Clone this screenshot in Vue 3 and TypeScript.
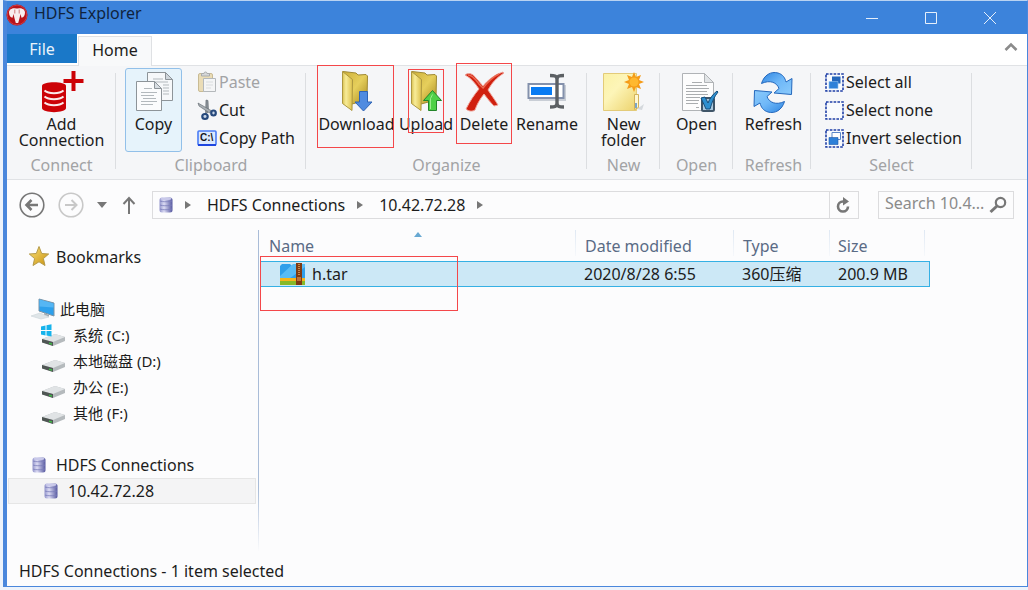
<script setup lang="ts">
import { ref } from 'vue'

interface Drive {
  name: string
  system: boolean
}

interface FileRow {
  name: string
  modified: string
  type: string
  size: string
}

const drives: Drive[] = [
  { name: '系统 (C:)', system: true },
  { name: '本地磁盘 (D:)', system: false },
  { name: '办公 (E:)', system: false },
  { name: '其他 (F:)', system: false },
]

const files: FileRow[] = [
  { name: 'h.tar', modified: '2020/8/28 6:55', type: '360压缩', size: '200.9 MB' },
]

const search = ref('')
</script>

<template>
  <div class="window">
    <header class="titlebar">
      <svg class="logo" viewBox="0 0 22 22" aria-hidden="true">
        <circle cx="11" cy="11" r="10.500" fill="#b8141b" />
        <circle cx="11" cy="11" r="9.800" fill="none" stroke="#cf3a41" />
        <path d="M10 4.500C7 3.500 3 5 3 8.500c0 3 1.500 5 3.500 5.200L7.500 10l.8 3.500L9.800 19h2.400l1.500-5.500.8-3.500 1 3.700c2-.2 3.500-2.200 3.500-5.200C19 5 15 3.500 12 4.500z" fill="#f8eeef" />
        <path d="M8.800 5.500v4M13.200 5.500v4" stroke="#cf787b" fill="none" />
      </svg>
      <h1>HDFS Explorer</h1>
      <div class="controls">
        <button type="button" aria-label="Minimize"><svg viewBox="0 0 14 14"><path d="M1 7.500h12" /></svg></button>
        <button type="button" aria-label="Maximize"><svg viewBox="0 0 14 14"><path d="M1.500 1.500h11v11h-11z" /></svg></button>
        <button type="button" aria-label="Close"><svg viewBox="0 0 14 14"><path d="M1 1l12 12M13 1L1 13" /></svg></button>
      </div>
    </header>

    <div class="tabs">
      <button type="button" class="tab file">File</button>
      <button type="button" class="tab home">Home</button>
      <button type="button" class="collapse" aria-label="Collapse ribbon">
        <svg viewBox="0 0 14 10"><path d="M1.500 8L7 2.500 12.500 8" fill="none" stroke="#8b8b8b" stroke-width="2.600" /></svg>
      </button>
    </div>

    <div class="ribbon">
      <section class="group connect">
        <div class="commands">
          <button type="button" class="large">
            <svg viewBox="0 0 42 42">
              <path d="M1 15c0-5 24-5 24 0v22c0 5.500-24 5.500-24 0z" fill="#cc0207" />
              <path d="M3.500 19.500c4 3.500 15 3.500 19 0M3.500 25.500c4 3.500 15 3.500 19 0M3.500 31.500c4 3.500 15 3.500 19 0" fill="none" stroke="#fbe9ea" stroke-width="2" />
              <path d="M32.500 0v20M22.500 10h20" stroke="#cc0207" stroke-width="4" />
            </svg>
            <span>Add<br>Connection</span>
          </button>
        </div>
        <h2>Connect</h2>
      </section>

      <section class="group clipboard">
        <div class="commands">
          <button type="button" class="large active">
            <svg viewBox="0 0 42 42">
              <path d="M14.500 1.500h18l7 7v21h-25z" fill="#f6f8fa" stroke="#8d9499" />
              <path d="M32.500 1.500v7h7z" fill="#cfd6dc" stroke="#8d9499" />
              <path d="M20 8h10M20 11h15M30 14h6M30 17h6M30 20h6M30 23h6" stroke="#b3b9bd" />
              <path d="M3.500 10.500h18l7 7v22h-25z" fill="#fbfcfd" stroke="#8d9499" />
              <path d="M21.500 10.500v7h7z" fill="#d8dee3" stroke="#8d9499" />
              <path d="M11 17.500h8M8 21.500h16M8 24.500h13M10 27.500h13M8 30.500h16M8 33.500h12" stroke="#b3b9bd" />
            </svg>
            <span>Copy</span>
          </button>
          <div class="stack">
            <button type="button" class="small" disabled>
              <svg viewBox="0 0 20 22">
                <rect x="1.500" y="2.500" width="14" height="18" rx="1.500" fill="#eadcb6" stroke="#c9bb94" />
                <path d="M4.500 5V2.500h2.500a1.500 1.500 0 0 1 3 0H12.500V5z" fill="#d5d7d9" stroke="#a8abad" />
                <path d="M6.500 7.500h12v13h-12z" fill="#f4f5f6" stroke="#b4b8bb" />
                <path d="M9 11h7M9 14h7M9 17h5" stroke="#d9dcde" />
              </svg>
              <span>Paste</span>
            </button>
            <button type="button" class="small">
              <svg viewBox="0 0 20 22">
                <path d="M9 1l2 .5.500 11-3 3z" fill="#8b9299" stroke="#5d656c" stroke-width=".6" />
                <path d="M1 4l13 7.500-1.500 2.500L2 7z" fill="#a9afb4" stroke="#5d656c" stroke-width=".6" />
                <ellipse cx="8" cy="17.500" rx="2.700" ry="2.500" fill="#c9d5e6" stroke="#26497c" stroke-width="2.200" />
                <ellipse cx="16.500" cy="14" rx="2.300" ry="2.500" fill="#c9d5e6" stroke="#26497c" stroke-width="2.200" />
              </svg>
              <span>Cut</span>
            </button>
            <button type="button" class="small">
              <svg viewBox="0 0 20 22">
                <rect x="1" y="4" width="18" height="14" rx="1" fill="#dce9fd" stroke="#4a7cf5" stroke-width="1.600" />
                <path d="M1 18h18" stroke="#1f46e0" stroke-width="2" />
                <text x="3" y="14" class="drive-text">C:\</text>
              </svg>
              <span>Copy Path</span>
            </button>
          </div>
        </div>
        <h2>Clipboard</h2>
      </section>

      <section class="group organize">
        <div class="commands">
          <button type="button" class="large">
            <svg viewBox="0 0 42 42">
              <defs>
                <linearGradient id="folderFront" x1="0" x2="1"><stop offset="0" stop-color="#d9c252" /><stop offset=".35" stop-color="#f8ec98" /><stop offset="1" stop-color="#dcc04a" /></linearGradient>
                <linearGradient id="folderBack" x1="0" y1="0" x2="1" y2="1"><stop offset="0" stop-color="#cdb03a" /><stop offset=".5" stop-color="#e6cf5c" /><stop offset="1" stop-color="#a98a1e" /></linearGradient>
                <g id="folder">
                  <path d="M7 .5l13 1.500 2 2 8-.5 1.500 1.500-.5 24-15 4z" fill="url(#folderBack)" stroke="#a08a35" />
                  <path d="M6.500.5l10 8-.5 31-9.500-7z" fill="url(#folderFront)" stroke="#ad9840" />
                </g>
              </defs>
              <use href="#folder" />
              <path d="M23.500 20.500h8v10.500h4.500l-8.500 9-8.500-9h4.500z" fill="#4f8be0" stroke="#2f64b5" />
            </svg>
            <span>Download</span>
            <i class="mark mark-download"></i>
          </button>
          <button type="button" class="large">
            <svg viewBox="0 0 42 42">
              <use href="#folder" />
              <path d="M23.500 39.500h8V29.500h5l-9-10-9 10h5z" fill="#4fd047" stroke="#23852a" />
              <path d="M25.500 38V27.500l2-4" fill="none" stroke="#9bec8d" />
            </svg>
            <span>Upload</span>
            <i class="mark mark-upload"></i>
          </button>
          <button type="button" class="large">
            <svg viewBox="0 0 42 42">
              <path d="M2 4c4-3 8-1 11 3 3 3 5 6 7 8 5-6 11-11 20-14l1 1c-8 5-12 10-16 17 4 6 7 10 10 15l-4 1c-4-4-7-8-10-12-4 5-7 10-9 16-3 2-7 1-9-1 4-8 8-14 13-20C12 12 8 7 2 4z" fill="#d0200f" stroke="#f0a69c" />
              <path d="M5 4c5 0 8 5 11 9l4 4c4-5 9-11 16-14" fill="none" stroke="#ea6a52" stroke-width="1.500" />
            </svg>
            <span>Delete</span>
            <i class="mark mark-delete"></i>
          </button>
          <button type="button" class="large">
            <svg viewBox="0 0 42 42">
              <path d="M3 29h36V14" fill="none" stroke="#c9ced6" stroke-width="2" />
              <path d="M2.500 13h35v14h-35z" fill="#fff" stroke="#8491ac" stroke-width="2" />
              <path d="M5 16h21v8H5z" fill="#087bf3" />
              <path d="M24 4.500c4 0 7 0 7 4 0-4 3-4 7-4M31 7v27M24 36c4 0 7 0 7-4 0 4 3 4 7 4" fill="none" stroke="#5c6064" stroke-width="3.400" />
            </svg>
            <span>Rename</span>
          </button>
        </div>
        <h2>Organize</h2>
      </section>

      <section class="group single">
        <div class="commands">
          <button type="button" class="large">
            <svg viewBox="0 0 42 42">
              <defs>
                <linearGradient id="newFolder" x1="0" y1="0" x2="1" y2="1"><stop offset="0" stop-color="#fbf2a6" /><stop offset=".4" stop-color="#fdf5b8" /><stop offset="1" stop-color="#ecd26c" /></linearGradient>
              </defs>
              <path d="M35 38l7-5-2 6z" fill="#d5d9dd" />
              <path d="M1.500 2.500h33v37h-33z" fill="url(#newFolder)" stroke="#e3cb79" />
              <path d="M32.500 23.500h4v13l-4 2z" fill="#fff8d2" stroke="#d2b25a" />
              <path d="M33 32h2v5h-2z" fill="#7aa5c8" />
              <path d="M32 1l2 5 5-2-2 5 5 2-5 2 2 5-5-2-2 5-2-5-5 2 2-5-5-2 5-2-2-5 5 2z" fill="#f59b16" />
              <circle cx="32" cy="11" r="4.500" fill="#ffb82e" />
            </svg>
            <span>New<br>folder</span>
          </button>
        </div>
        <h2>New</h2>
      </section>

      <section class="group single">
        <div class="commands">
          <button type="button" class="large">
            <svg viewBox="0 0 42 42">
              <path d="M6.500 2.500h22l9 9v28h-31z" fill="#fdfdfd" stroke="#b0b3b6" />
              <path d="M28.500 2.500v9h9z" fill="#e2e5e7" stroke="#b0b3b6" />
              <path d="M16 11.500h10M10 14.500h21M10 17.500h23M10 20.500h21M10 23.500h22M10 26.500h14M10 29.500h13M10 32.500h12M20 36.500h3" stroke="#aaadaf" />
              <rect x="26" y="27" width="12" height="13" rx="1.500" fill="#a9c8de" stroke="#3f5568" stroke-width="2" />
              <path d="M25 27l4-1 3 6c2-5 5-9 9-12l1 1c-4 5-6 10-8 17h-4z" fill="#2e8fcf" stroke="#174f7c" />
            </svg>
            <span>Open</span>
          </button>
        </div>
        <h2>Open</h2>
      </section>

      <section class="group refresh">
        <div class="commands">
          <button type="button" class="large">
            <svg viewBox="0 0 42 42">
              <defs>
                <linearGradient id="arrowBlue" x1="0" y1="0" x2="1" y2="1"><stop offset="0" stop-color="#2f86e2" /><stop offset=".5" stop-color="#6fb8f8" /><stop offset="1" stop-color="#8ccbfc" /></linearGradient>
                <path id="halfTurn" d="M9.500 12.500C12 4 19 0 26 2c5 1.500 7 5 8 9l6-3.500-.5 16L22 22l5-4.500c-2-6-9-9-17.500-5z" stroke="#2468bd" />
              </defs>
              <use href="#halfTurn" fill="url(#arrowBlue)" />
              <use href="#halfTurn" fill="url(#arrowBlue)" transform="rotate(180 21 21.500)" />
            </svg>
            <span>Refresh</span>
          </button>
        </div>
        <h2>Refresh</h2>
      </section>

      <section class="group select">
        <div class="commands">
          <div class="stack">
            <button type="button" class="small">
              <svg viewBox="0 0 20 22">
                <rect x="2" y="3" width="17" height="17" fill="#f8fafd" stroke="#1f3fa6" stroke-width="1.600" stroke-dasharray="2.600 1.200" />
                <path d="M8 5.500h8.500v7H8z" fill="#2365ba" /><path d="M5 10.500h9v7H5z" fill="#2e80d8" stroke="#8ec0f0" stroke-width=".6" />
              </svg>
              <span>Select all</span>
            </button>
            <button type="button" class="small">
              <svg viewBox="0 0 20 22">
                <rect x="2" y="3" width="17" height="17" fill="#f8fafd" stroke="#1f3fa6" stroke-width="1.600" stroke-dasharray="2.600 1.200" />
              </svg>
              <span>Select none</span>
            </button>
            <button type="button" class="small">
              <svg viewBox="0 0 20 22">
                <rect x="2" y="3" width="17" height="17" fill="#f8fafd" stroke="#1f3fa6" stroke-width="1.600" stroke-dasharray="2.600 1.200" />
                <path d="M8 5.500h8.500v7H8z" fill="#fff" stroke="#5b86c9" /><path d="M5 10.500h9v7H5z" fill="#2e80d8" stroke="#1f57a8" stroke-width=".6" />
              </svg>
              <span>Invert selection</span>
            </button>
          </div>
        </div>
        <h2>Select</h2>
      </section>
    </div>

    <nav class="navbar" aria-label="Location">
      <button type="button" class="round" aria-label="Back">
        <svg viewBox="0 0 26 26" fill="none" stroke="#777"><circle cx="13" cy="13" r="11.800" stroke-width="1.600" /><path d="M19 13H8M12.500 8L7.500 13l5 5" stroke-width="2.600" /></svg>
      </button>
      <button type="button" class="round" aria-label="Forward">
        <svg viewBox="0 0 26 26" fill="none" stroke="#c8c8c8"><circle cx="13" cy="13" r="11.800" stroke-width="1.600" /><path d="M7 13h11M13.500 8l5 5-5 5" stroke-width="2" /></svg>
      </button>
      <button type="button" class="recent" aria-label="Recent locations">
        <svg viewBox="0 0 10 6"><path d="M0 0h10L5 6z" fill="#777" /></svg>
      </button>
      <button type="button" class="up" aria-label="Up">
        <svg viewBox="0 0 14 18"><path d="M7 18V2M1.500 8L7 2l5.500 6" fill="none" stroke="#777" stroke-width="2" /></svg>
      </button>
      <div class="address">
        <svg class="db" viewBox="0 0 14 16"><use href="#database" /></svg>
        <svg class="chevron" viewBox="0 0 6 8"><path d="M0 0l6 4-6 4z" /></svg>
        <a href="#connections">HDFS Connections</a>
        <svg class="chevron" viewBox="0 0 6 8"><path d="M0 0l6 4-6 4z" /></svg>
        <a href="#host">10.42.72.28</a>
        <svg class="chevron" viewBox="0 0 6 8"><path d="M0 0l6 4-6 4z" /></svg>
        <button type="button" class="reload" aria-label="Reload">
          <svg viewBox="0 0 14 18"><path d="M8 5.500H7a5 5 0 1 0 5 5" fill="none" stroke="#777" stroke-width="2.600" /><path d="M7 1l6 4.500-6 4z" fill="#777" /></svg>
        </button>
      </div>
      <div class="search">
        <input v-model="search" type="text" placeholder="Search 10.4..." aria-label="Search 10.42.72.28">
        <svg viewBox="0 0 18 18"><circle cx="11.500" cy="6.500" r="4.700" fill="none" stroke="#777" stroke-width="2.200" /><path d="M8 10l-6.500 6" stroke="#777" stroke-width="3" /></svg>
      </div>
    </nav>

    <main class="body">
      <aside class="sidebar">
        <ul>
          <li>
            <a href="#bookmarks" class="root">
              <svg class="star" viewBox="0 0 22 22">
                <defs><linearGradient id="gold" x1="0" y1="0" x2="1" y2="1"><stop offset="0" stop-color="#fbe27a" /><stop offset="1" stop-color="#c8900c" /></linearGradient></defs>
                <path d="M11 .5l2.700 7 7 .5-5.300 4.600 1.600 6.900-6-3.700L5 19.500l1.600-6.900L1.300 8l7-.5z" fill="url(#gold)" stroke="#b59a48" />
              </svg>
              <span>Bookmarks</span>
            </a>
          </li>
        </ul>
        <ul>
          <li>
            <a href="#computer" class="root computer">
              <svg class="pc" viewBox="0 0 26 22">
                <path d="M9 1l15 4v13L9 13z" fill="#2da0ec" stroke="#7c94a6" />
                <path d="M9.500 1.500l14 4v4l-14-1z" fill="#55b6f4" />
                <path d="M14 15l5 2v2l-5-1z" fill="#9fa9b0" />
                <path d="M1 18l9-3 9 4-8 2z" fill="#dfe5e8" stroke="#d0d8dc" stroke-width=".7" />
              </svg>
              <span>此电脑</span>
            </a>
          </li>
          <li v-for="drive in drives" :key="drive.name">
            <a href="#drive" class="child">
              <svg class="disk" viewBox="0 0 26 22">
                <path d="M1 15l13-5 10 3v4l-12 5-11-4z" fill="#b5babd" />
                <path d="M1 15l13-5 10 3-12 5z" fill="#e0e3e5" />
                <path d="M1 15l11 3v4L1 18.500z" fill="#4f5654" />
                <path d="M8 18.500l3 .8v1.500l-3-.8z" fill="#3dbb45" />
                <path v-if="drive.system" d="M0 2.500l4.500-1V6H0zM5.500 1.300l5-1.100V6h-5zM0 7h4.500v4.500l-4.500-1zM5.500 7h5v5.500l-5-1z" fill="#16b3ec" />
              </svg>
              <span>{{ drive.name }}</span>
            </a>
          </li>
        </ul>
        <ul>
          <li>
            <a href="#connections" class="root">
              <svg class="db tree-db" viewBox="0 0 14 16">
                <defs>
                  <linearGradient id="violet"><stop offset="0" stop-color="#9294cb" /><stop offset=".35" stop-color="#dcdcf4" /><stop offset="1" stop-color="#55579f" /></linearGradient>
                </defs>
                <g id="database">
                  <rect x=".5" y=".5" width="13" height="15" rx="2.500" fill="url(#violet)" />
                  <path d="M1 4c2 1 10 1 12 0M1 8c2 1 10 1 12 0M1 12c2 1 10 1 12 0" fill="none" stroke="#7a7cba" stroke-width=".8" />
                  <ellipse cx="7" cy="1.800" rx="5.500" ry="1.300" fill="#c9c9ea" />
                </g>
              </svg>
              <span>HDFS Connections</span>
            </a>
          </li>
          <li>
            <a href="#host" class="host selected">
              <svg class="db tree-db" viewBox="0 0 14 16"><use href="#database" /></svg>
              <span>10.42.72.28</span>
            </a>
          </li>
        </ul>
      </aside>

      <section class="files">
        <table>
          <thead>
            <tr>
              <th class="name">Name<svg class="sort" viewBox="0 0 8 5"><path d="M0 5l4-5 4 5z" fill="#67a8d2" /></svg></th>
              <th class="date">Date modified</th>
              <th class="type">Type</th>
              <th class="size">Size</th>
            </tr>
          </thead>
          <tbody>
            <tr v-for="file in files" :key="file.name">
              <td>
                <div class="file-name">
                  <svg viewBox="0 0 26 22">
                    <path d="M0 3l2-2h8l2 2h13v13H0z" fill="#2f9fea" />
                    <path d="M0 13L13 1h12v3L9 16H0z" fill="#59bcf6" />
                    <path d="M0 15h25v3H0z" fill="#f6b51c" />
                    <path d="M0 18h25v4H0z" fill="#87b929" />
                    <path d="M16 0h6v22h-6z" fill="#7e3a12" />
                    <path d="M19 1v12" stroke="#c98a4b" stroke-dasharray="1 1" stroke-width="2" />
                    <path d="M17 14h4v4h-4z" fill="#b9713a" />
                  </svg>
                  <span>{{ file.name }}</span>
                </div>
              </td>
              <td>{{ file.modified }}</td>
              <td>{{ file.type }}</td>
              <td>{{ file.size }}</td>
            </tr>
          </tbody>
        </table>
        <i class="mark mark-file"></i>
      </section>
    </main>

    <footer class="status">HDFS Connections - 1 item selected</footer>
  </div>
</template>

<style>
body {
  margin: 0;
  background: #edf3fb;
}
</style>

<style scoped>
.window,
.window * {
  box-sizing: border-box;
}

.window {
  display: flex;
  flex-direction: column;
  min-height: calc(100vh - 3px);
  margin-left: 3px;
  border: solid #4a87dc;
  border-width: 0 1px 1px 4px;
  border-top: 1px solid #b9d3f2;
  background: #fcfcfd;
  color: #1c1c1c;
  font: 16px/20px "Noto Sans", "Noto Sans CJK SC", sans-serif;
}

button {
  margin: 0;
  padding: 0;
  border: 0;
  background: none;
  color: inherit;
  font: inherit;
}

a {
  color: inherit;
  text-decoration: none;
}

h1,
h2 {
  margin: 0;
  font-size: 16px;
  font-weight: 400;
}

svg {
  display: block;
  flex: none;
}

.titlebar {
  display: flex;
  height: 33px;
  background: #3c83db;
}

.logo {
  width: 22px;
  height: 22px;
  margin: 3px 6px 0 -1px;
}

.titlebar h1 {
  padding-top: 2px;
  color: #10233d;
  line-height: 20px;
}

.controls {
  display: flex;
  margin: 0 8px 0 auto;
}

.controls button {
  display: grid;
  place-items: center;
  width: 59px;
}

.controls svg {
  width: 14px;
  height: 14px;
  fill: none;
  stroke: #e6effa;
}

.tabs {
  display: flex;
  align-items: flex-start;
  height: 31px;
  background: #fff;
}

.file {
  width: 70px;
  height: 29px;
  background: #1a78c8;
  color: #e9f3fb;
}

.home {
  position: relative;
  z-index: 1;
  width: 74px;
  height: 30px;
  margin: 2px 0 0 1px;
  padding-bottom: 3px;
  border: 1px solid #dfe1e4;
  border-bottom: 0;
  background: #f8f9fa;
}

.collapse {
  margin: 8px 9px 0 auto;
}

.collapse svg {
  width: 14px;
  height: 10px;
}

.ribbon {
  display: flex;
  height: 115px;
  border: solid #e0e2e5;
  border-width: 1px 0;
  background: #f5f6f8;
}

.group {
  position: relative;
  display: flex;
  flex: none;
  flex-direction: column;
  justify-content: space-between;
  padding: 2px 0 4px;
}

.group::after {
  position: absolute;
  top: 7px;
  right: 0;
  bottom: 10px;
  width: 1px;
  background: #dcdee1;
  content: "";
}

.group h2 {
  color: #a2a3a5;
  text-align: center;
}

.connect { width: 109px; }
.clipboard { width: 190px; }
.organize { width: 281px; }
.single { width: 73px; }

.refresh {
  width: 78px;
  padding-left: 3px;
}

.select { width: 161px; }

.commands {
  display: flex;
  justify-content: center;
}

.clipboard .commands {
  justify-content: flex-start;
  gap: 15px;
  padding-left: 9px;
}

.organize .commands {
  display: grid;
  grid-template-columns: 79px 60px 56px 70px;
  justify-content: start;
  padding-left: 11px;
}

.select .commands {
  justify-content: flex-start;
  padding-left: 13px;
}

.large {
  position: relative;
  display: flex;
  flex-direction: column;
  align-items: center;
  gap: 3px;
  height: 84px;
  padding-top: 3px;
  line-height: 16px;
  white-space: nowrap;
}

.large svg {
  width: 42px;
  height: 42px;
  overflow: visible;
}

.clipboard .large {
  width: 57px;
  padding-top: 2px;
  border: 1px solid #92c0e9;
  border-radius: 3px;
  background: #e6f3fb;
}

.stack {
  display: flex;
  flex-direction: column;
}

.small {
  display: flex;
  align-items: center;
  gap: 2px;
  height: 28px;
  white-space: nowrap;
}

.small svg {
  width: 20px;
  height: 22px;
}

.small:disabled {
  color: #a2a3a5;
}

.drive-text {
  fill: #14161c;
  font: 700 10px "Liberation Sans", sans-serif;
}

.mark {
  position: absolute;
  border: 1px solid #f4474a;
  pointer-events: none;
}

.mark-download { inset: -3px 2px 4px 0; }
.mark-upload { inset: 1px 12px 19px; }
.mark-delete { inset: -5px 0 8px; }
.mark-file { top: 26px; left: 1px; width: 198px; height: 55px; }

.navbar {
  display: flex;
  align-items: center;
  height: 50px;
  padding: 0 13px 0 12px;
}

.round svg {
  width: 26px;
  height: 26px;
}

.round + .round {
  margin-left: 13px;
}

.recent {
  margin-left: 13px;
}

.recent svg {
  width: 10px;
  height: 6px;
}

.up {
  margin: 0 16px 0 15px;
}

.up svg {
  width: 14px;
  height: 18px;
}

.address {
  display: flex;
  flex: 1;
  align-items: center;
  height: 28px;
  padding-left: 6px;
  border: 1px solid #dcdcde;
}

.db {
  width: 14px;
  height: 16px;
}

.chevron {
  width: 6px;
  height: 8px;
  margin: 0 16px 0 12px;
  fill: #777;
}

.reload {
  display: grid;
  place-items: center;
  align-self: stretch;
  width: 29px;
  margin-left: auto;
  padding-right: 3px;
  border-left: 1px solid #dcdcde;
}

.reload svg {
  width: 14px;
  height: 18px;
}

.search {
  display: flex;
  align-items: center;
  width: 136px;
  height: 28px;
  margin-left: 19px;
  padding: 0 6px;
  border: 1px solid #dcdcde;
}

.search input {
  flex: 1;
  min-width: 0;
  height: 22px;
  margin-bottom: 4px;
  padding: 0;
  border: 0;
  outline: 0;
  background: none;
  color: #444;
  font: inherit;
}

.search input::placeholder {
  color: #8b8b8b;
  opacity: 1;
}

.search svg {
  width: 18px;
  height: 18px;
}

.body {
  display: flex;
  flex: 1;
}

.sidebar {
  display: flex;
  flex: none;
  flex-direction: column;
  gap: 26px;
  width: 252px;
  padding: 14px 2px 0 1px;
  border-right: 1px solid;
  border-image: linear-gradient(#a9bcd8 0 80%, #fcfcfd) 1;
  border-image-width: 0 1px 0 0;
}

.sidebar ul {
  margin: 0;
  padding: 0;
  list-style: none;
}

.sidebar a {
  display: flex;
  align-items: center;
  gap: 6px;
  height: 26px;
  padding-left: 20px;
}

.star {
  width: 22px;
  height: 22px;
}

.sidebar .computer {
  gap: 4px;
  padding-left: 22px;
  font-size: 15px;
}

.pc,
.disk {
  width: 26px;
  height: 22px;
}

.sidebar .child {
  padding-left: 33px;
  font-size: 15px;
}

.sidebar .root .tree-db {
  margin: 0 4px;
}

.sidebar .host {
  gap: 10px;
  padding-left: 35px;
  border: 1px solid #e6e6e6;
  background: #f4f4f5;
}

.files {
  position: relative;
  flex: 1;
  padding-left: 1px;
}

table {
  width: 670px;
  border-collapse: separate;
  border-spacing: 0;
  table-layout: fixed;
}

th {
  height: 31px;
  padding: 0 0 0 9px;
  background: linear-gradient(#dfe8f3, #f6f8fb) right top / 1px 26px no-repeat;
  color: #5a6b85;
  font-weight: 400;
  text-align: left;
}

.name { position: relative; width: 316px; }
.date { width: 158px; }
.type { width: 96px; }

.size {
  padding-left: 8px;
  background-position: 94px 0;
}

.sort {
  position: absolute;
  top: 2px;
  left: 154px;
  width: 8px;
  height: 5px;
}

td {
  height: 26px;
  padding: 0 0 0 8px;
  border: solid #35b0e4;
  border-width: 1px 0;
  background: #cce8f6;
}

td:last-child {
  border-right-width: 1px;
}

.file-name {
  display: flex;
  align-items: center;
  gap: 6px;
  padding-left: 12px;
}

.file-name svg {
  width: 26px;
  height: 22px;
}

.status {
  padding: 10px 12px 5px;
}
</style>
